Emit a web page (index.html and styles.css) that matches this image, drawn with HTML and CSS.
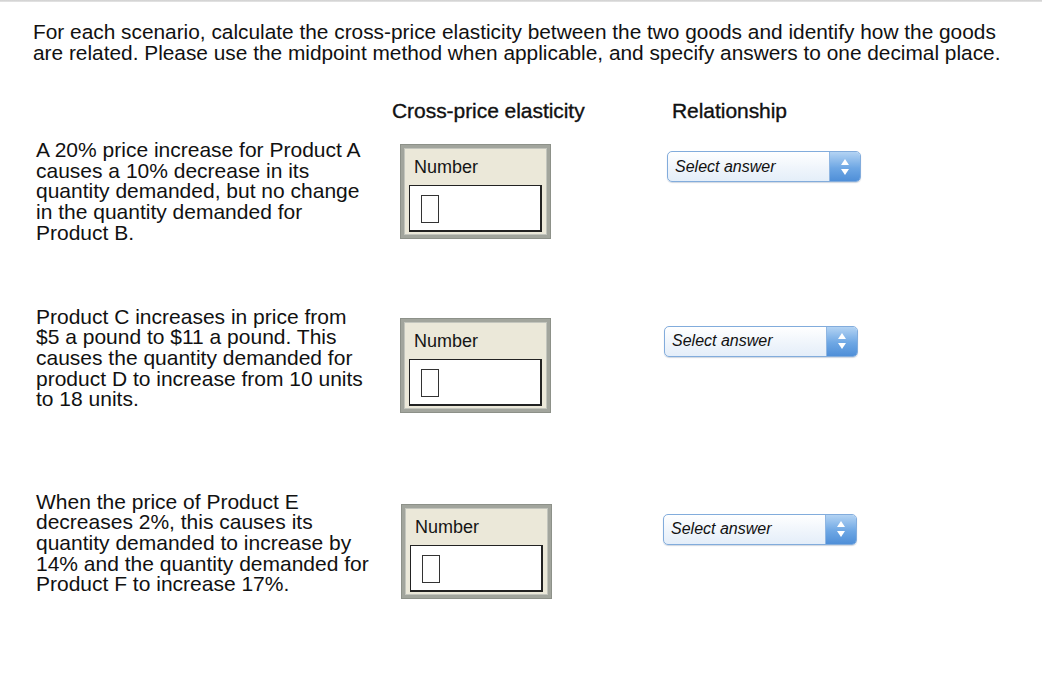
FILE: index.html
```html
<!DOCTYPE html>
<html>
<head>
<meta charset="utf-8">
<link rel="stylesheet" href="styles.css">
</head>
<body>
<div class="topline"></div>
<div class="page">
  <p class="intro">For each scenario, calculate the cross-price elasticity between the two goods and identify how the goods are related. Please use the midpoint method when applicable, and specify answers to one decimal place.</p>
  <div class="heads">
    <div class="head head-cpe">Cross-price elasticity</div>
    <div class="head head-rel">Relationship</div>
  </div>

  <div class="row row1">
    <div class="scenario">A 20% price increase for Product A causes a 10% decrease in its quantity demanded, but no change in the quantity demanded for Product B.</div>
    <div class="numbox">
      <div class="numlabel">Number</div>
      <div class="numinput"><span class="caret"></span></div>
    </div>
    <div class="select">
      <span class="seltext">Select answer</span>
      <span class="selbtn"><span class="up"></span><span class="down"></span></span>
    </div>
  </div>

  <div class="row row2">
    <div class="scenario">Product C increases in price from $5 a pound to $11 a pound. This causes the quantity demanded for product D to increase from 10 units to 18 units.</div>
    <div class="numbox">
      <div class="numlabel">Number</div>
      <div class="numinput"><span class="caret"></span></div>
    </div>
    <div class="select">
      <span class="seltext">Select answer</span>
      <span class="selbtn"><span class="up"></span><span class="down"></span></span>
    </div>
  </div>

  <div class="row row3">
    <div class="scenario">When the price of Product E decreases 2%, this causes its quantity demanded to increase by 14% and the quantity demanded for Product F to increase 17%.</div>
    <div class="numbox">
      <div class="numlabel">Number</div>
      <div class="numinput"><span class="caret"></span></div>
    </div>
    <div class="select">
      <span class="seltext">Select answer</span>
      <span class="selbtn"><span class="up"></span><span class="down"></span></span>
    </div>
  </div>
</div>
</body>
</html>
```

FILE: styles.css
```css
* { box-sizing: border-box; }
html, body { margin: 0; padding: 0; background: #fff; }
body {
  font-family: "Liberation Sans", Arial, sans-serif;
  color: #111;
  width: 1042px;
  height: 674px;
  overflow: hidden;
}
.topline {
  height: 2px;
  background: linear-gradient(#cfcfcf, #e6e6e6);
}
.page {
  padding: 0 0 0 33px;
}
.intro {
  margin: 19px 0 0 0;
  width: 985px;
  font-size: 20.85px;
  line-height: 21px;
}
.heads {
  display: flex;
  margin-top: 37px;
  height: 22px;
}
.head {
  font-size: 21px;
  line-height: 22px;
  letter-spacing: -0.05px;
  -webkit-text-stroke: 0.35px #111;
}
.head-cpe { margin-left: 359px; width: 280px; }
.head-rel { margin-left: 0; }

.row {
  display: flex;
  align-items: flex-start;
}
.scenario {
  width: 334px;
  margin-left: 3px;
  font-size: 21px;
  line-height: 20.7px;
}
.numbox {
  width: 151px;
  height: 95px;
  margin-left: 30px;
  border: 4px solid #a2a59d;
  box-shadow: inset 0 0 0 1px #c3c5bd;
  outline: 1px solid #8d9189;
  outline-offset: -1px;
  background: #ebe8d9;
  padding: 0 0 0 5px;
}
.numlabel {
  font-size: 18px;
  line-height: 20px;
  margin: 9px 0 0 5px;
  color: #151515;
}
.numinput {
  margin-top: 8px;
  width: 133px;
  height: 47px;
  background: #fff;
  border: 1px solid #222;
  border-right-width: 2px;
  border-bottom-width: 2px;
  padding: 9px 0 0 11px;
}
.caret {
  display: block;
  width: 18px;
  height: 28px;
  border: 1px solid #333;
}
.select {
  width: 194px;
  height: 31px;
  border: 1px solid #82acdc;
  border-radius: 5px;
  background: linear-gradient(#ffffff, #eef4fb 60%, #e4eef9);
  box-shadow: 0 1px 1px rgba(120,140,170,0.35);
  display: flex;
  align-items: center;
  overflow: hidden;
}
.seltext {
  font-style: italic;
  font-size: 16px;
  padding-left: 7px;
  flex: 1;
  color: #111;
}
.selbtn {
  width: 31px;
  align-self: stretch;
  background: linear-gradient(#b3d3f3, #6ea7e4 55%, #4f8fd8);
  border-left: 1px solid #8fb6e2;
  display: flex;
  flex-direction: column;
  align-items: center;
  justify-content: center;
  gap: 4px;
}
.up, .down {
  width: 0;
  height: 0;
  border-left: 4px solid transparent;
  border-right: 4px solid transparent;
}
.up { border-bottom: 6px solid #fff; }
.down { border-top: 6px solid #fff; }

.row1 { margin-top: 18px; }
.row1 .numbox { margin-top: 4px; }
.row1 .select { margin-top: 11px; margin-left: 116px; }

.row2 { margin-top: 63px; }
.row2 .numbox { margin-top: 11px; }
.row2 .select { margin-top: 19px; margin-left: 113px; }

.row3 { margin-top: 79px; }
.row3 .numbox { margin-top: 12px; margin-left: 31px; }
.row3 .select { margin-top: 22px; margin-left: 111px; }
```
